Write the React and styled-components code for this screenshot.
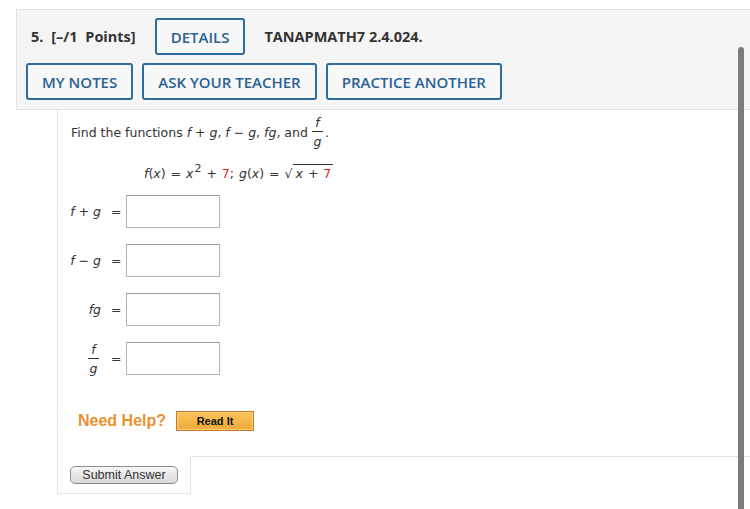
import React from "react";
import styled, { createGlobalStyle } from "styled-components";

const Global = createGlobalStyle`
  html, body { margin: 0; padding: 0; background: #fff; }
  body { font-family: "Open Sans", "Liberation Sans", sans-serif; overflow: hidden; }
`;

const Page = styled.div`
  position: relative;
  width: 750px;
  height: 509px;
  overflow: hidden;
  padding: 9px 0 0 16px;
  box-sizing: border-box;
`;

const Header = styled.div`
  width: 760px;
  height: 101px;
  box-sizing: border-box;
  background: #f5f5f5;
  border: 1px solid #e3e3e3;
  padding: 8px 0 0 9px;
  display: flex;
  flex-direction: column;
  gap: 8px;
`;

const TitleRow = styled.div`
  display: flex;
  align-items: center;
  padding-left: 5px;
  gap: 19px;
`;

const Points = styled.span`
  font-size: 14.5px;
  font-weight: 700;
  color: #333;
  word-spacing: 4px;
`;

const Code = styled.span`
  font-size: 14.5px;
  font-weight: 700;
  color: #333;
`;

const ButtonRow = styled.div`
  display: flex;
  gap: 9px;
`;

const OutlineButton = styled.button`
  height: 37px;
  box-sizing: border-box;
  padding: 0 ${(p) => p.$pad || 14}px;
  border: 2px solid #2f6b9e;
  border-radius: 3px;
  background: #f8f8f8;
  color: #2a6194;
  font-family: "Open Sans", "Liberation Sans", sans-serif;
  font-size: 15px;
  font-weight: 600;
  cursor: pointer;
`;

const Body = styled.div`
  margin-left: 41px;
  border-left: 1px solid #e6e6e6;
  padding: 5px 0 0 13px;
  height: 346px;
  box-sizing: border-box;
  font-family: "DejaVu Sans", Verdana, sans-serif;
  font-size: 12.5px;
  color: #333;
`;

const Question = styled.div`
  display: flex;
  align-items: center;
  height: 34px;
  white-space: pre;
`;

const I = styled.i`
  font-style: italic;
`;

const Frac = styled.span`
  display: inline-flex;
  flex-direction: column;
  align-items: center;
  margin: 0 2px 0 4px;
  line-height: 13px;
`;

const Bar = styled.span`
  display: block;
  width: 11px;
  height: 1px;
  background: #333;
  margin: 2px 0 3px;
`;

const Formula = styled.div`
  margin: 15px 0 0 73px;
  display: flex;
  align-items: baseline;
  white-space: pre;
  word-spacing: 1px;
`;

const Red = styled.span`
  color: #e41f1a;
`;

const Sup = styled.span`
  font-size: 11px;
  position: relative;
  top: -6px;
  margin-left: 1px;
`;

const Radical = styled.span`
  display: inline-flex;
  align-items: flex-end;
`;

const RadicalBody = styled.span`
  border-top: 1px solid #333;
  padding: 1px 2px 0 3px;
`;

const Answers = styled.div`
  margin-top: 14px;
  display: flex;
  flex-direction: column;
  gap: 16px;
`;

const AnswerRow = styled.div`
  display: flex;
  align-items: center;
  height: 33px;
`;

const Label = styled.span`
  width: 30px;
  display: flex;
  justify-content: flex-end;
  align-items: center;
  white-space: pre;
`;

const Equals = styled.span`
  width: 25px;
  padding-left: 10px;
  box-sizing: border-box;
`;

const Input = styled.input`
  width: 94px;
  height: 33px;
  box-sizing: border-box;
  border: 1px solid #b5b5b5;
  border-top-color: #9a9a9a;
  background: #fff;
  margin: 0;
`;

const Help = styled.div`
  margin: 36px 0 0 7px;
  display: flex;
  align-items: center;
  gap: 10px;
`;

const HelpText = styled.span`
  font-family: "Liberation Sans", Arial, sans-serif;
  font-weight: 700;
  font-size: 16px;
  color: #e8922f;
`;

const ReadIt = styled.button`
  width: 78px;
  height: 20px;
  box-sizing: border-box;
  border: 1px solid #c9782a;
  box-shadow: inset 0 0 0 1px #f9d07a;
  background: linear-gradient(#f8c45a, #f0a93a);
  font-family: "Liberation Sans", Arial, sans-serif;
  font-weight: 700;
  font-size: 11px;
  color: #111;
  padding: 0;
`;

const Footer = styled.div`
  display: flex;
  margin-left: 41px;
`;

const SubmitTab = styled.div`
  width: 134px;
  height: 38px;
  box-sizing: border-box;
  border: 1px solid #e6e6e6;
  border-top: none;
  padding: 10px 0 0 12px;
  display: flex;
  align-items: flex-start;
`;

const Filler = styled.div`
  flex: 1;
  border-top: 1px solid #e3e3e3;
`;

const SubmitButton = styled.button`
  width: 108px;
  height: 18px;
  box-sizing: border-box;
  border: 1px solid #8c8c8c;
  border-radius: 5px;
  background: linear-gradient(#f7f7f7, #d9d9d9);
  font-family: "Liberation Sans", Arial, sans-serif;
  font-size: 12.5px;
  color: #333;
  padding: 0;
  line-height: 15px;
`;

const Scrollbar = styled.div`
  position: absolute;
  left: 738px;
  top: 47px;
  width: 6px;
  height: 480px;
  border-radius: 3px;
  background: #7c7c7c;
`;

export default function App() {
  return (
    <Page>
      <Global />
      <Header>
        <TitleRow>
          <Points>5. [–/1 Points]</Points>
          <OutlineButton $pad={14}>DETAILS</OutlineButton>
          <Code>TANAPMATH7 2.4.024.</Code>
        </TitleRow>
        <ButtonRow>
          <OutlineButton>MY NOTES</OutlineButton>
          <OutlineButton>ASK YOUR TEACHER</OutlineButton>
          <OutlineButton>PRACTICE ANOTHER</OutlineButton>
        </ButtonRow>
      </Header>
      <Body>
        <Question>
          Find the functions <I>f</I> + <I>g</I>, <I>f</I> − <I>g</I>, <I>fg</I>, and
          <Frac>
            <I>f</I>
            <Bar />
            <I>g</I>
          </Frac>
          .
        </Question>
        <Formula>
          <I>f</I>(<I>x</I>) = <I>x</I>
          <Sup>2</Sup> + <Red>7</Red>; <I>g</I>(<I>x</I>) = <Radical>
            √<RadicalBody><I>x</I> + <Red>7</Red></RadicalBody>
          </Radical>
        </Formula>
        <Answers>
          <AnswerRow>
            <Label><I>f</I> + <I>g</I></Label>
            <Equals>=</Equals>
            <Input />
          </AnswerRow>
          <AnswerRow>
            <Label><I>f</I> − <I>g</I></Label>
            <Equals>=</Equals>
            <Input />
          </AnswerRow>
          <AnswerRow>
            <Label><I>fg</I></Label>
            <Equals>=</Equals>
            <Input />
          </AnswerRow>
          <AnswerRow>
            <Label>
              <Frac>
                <I>f</I>
                <Bar />
                <I>g</I>
              </Frac>
            </Label>
            <Equals>=</Equals>
            <Input />
          </AnswerRow>
        </Answers>
        <Help>
          <HelpText>Need Help?</HelpText>
          <ReadIt>Read It</ReadIt>
        </Help>
      </Body>
      <Footer>
        <SubmitTab>
          <SubmitButton>Submit Answer</SubmitButton>
        </SubmitTab>
        <Filler />
      </Footer>
      <Scrollbar />
    </Page>
  );
}
